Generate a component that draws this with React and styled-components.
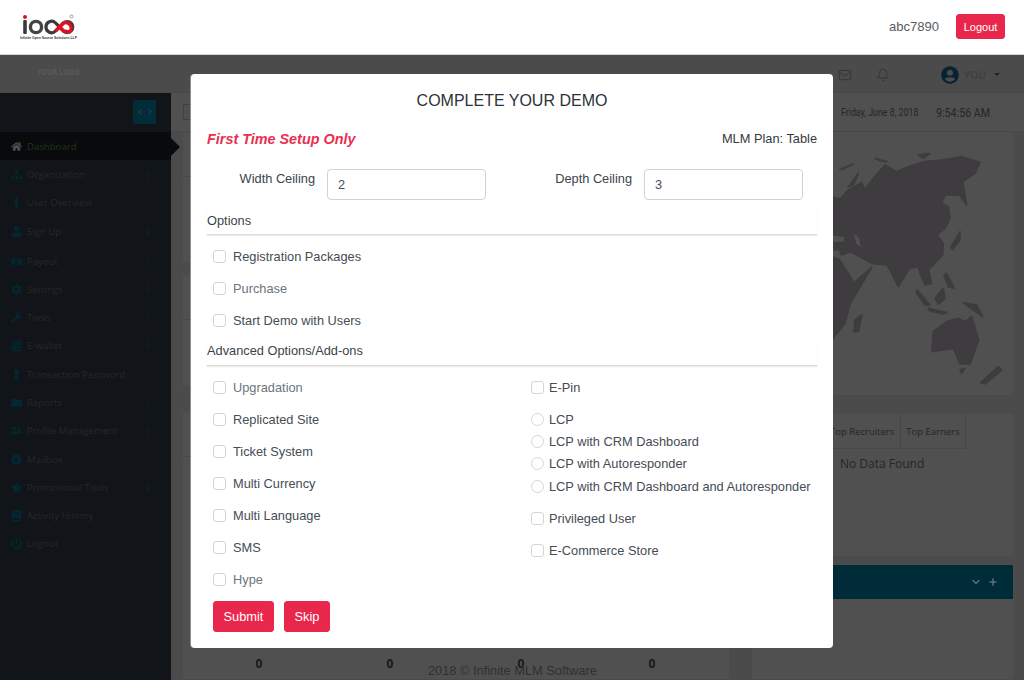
import React from "react";
import styled, { createGlobalStyle } from "styled-components";
import {
  FaHome, FaSitemap, FaMale, FaUser, FaMoneyBillAlt, FaCog, FaWrench, FaCalendarAlt,
  FaFolder, FaUserFriends, FaDotCircle, FaStar, FaBook, FaPowerOff, FaUserCircle,
} from "react-icons/fa";
import { ChevronRight, ChevronLeft, ChevronDown, Plus, Mail, Bell } from "lucide-react";

const Global = createGlobalStyle`
  html, body { margin: 0; padding: 0; background: #4b4b4b; }
  * { box-sizing: border-box; }
  body { font-family: "Liberation Sans", Arial, sans-serif; }
`;

const Page = styled.div`
  position: relative; width: 1024px; height: 680px; overflow: hidden;
  display: flex; flex-direction: column; background: #4b4b4b;
`;
const TopBar = styled.header`
  height: 55px; flex: none; background: #fff; border-bottom: 1px solid #d6d6d6;
  display: flex; align-items: center; padding: 0 19px 1px 20px;
`;
const LogoBox = styled.div`
  display: flex; flex-direction: column; align-items: flex-start; width: 60px; margin-top: 2px;
`;
const LogoTiny = styled.span`
  font-size: 3.4px; line-height: 5px; margin-top: 1px; white-space: nowrap; color: #333; font-weight: 700;
`;
const UserName = styled.span`
  margin-left: auto; font-size: 13px; color: #555c63; margin-right: 17px;
`;
const RedButton = styled.button`
  border: 1px solid #e9264b; background: #e9264b; color: #fff; border-radius: 3px;
  font-family: inherit; cursor: pointer; padding: 0;
  font-size: ${p => p.$small ? "11px" : "12.8px"};
  width: ${p => p.$w}px; height: ${p => p.$small ? "25px" : "31px"};
`;
const Strip = styled.div`
  height: 38px; flex: none; background: #4b4b4b; display: flex; align-items: center;
  padding: 0 24px 4px 37px; color: #2e2e2e; border-bottom: 1px solid #474747;
`;
const StripLogo = styled.span`
  display: inline-block; font-family: "Open Sans", sans-serif; font-size: 8.5px; font-weight: 700; color: #5a5a5a;
  white-space: nowrap; transform: scaleX(.84); transform-origin: left;
`;
const StripRight = styled.div`
  margin-left: auto; display: flex; align-items: center; padding-top: 6px;
`;
const YouLabel = styled.span`
  font-family: "Open Sans", sans-serif; font-size: 10.5px; font-weight: 600; color: #3c4044; margin-left: 5px;
`;
const Caret = styled.span`
  width: 0; height: 0; margin-left: 8px; border: 3px solid transparent; border-top: 3px solid #0a2a38; border-bottom: 0;
`;
const Body = styled.div`
  flex: 1; min-height: 0; display: flex;
`;
const Sidebar = styled.nav`
  width: 171px; flex: none; background: #111419; padding-top: 7px; position: relative;
`;
const Toggle = styled.div`
  width: 23px; height: 24px; background: #022c38; border-radius: 2px; margin: 0 15px 8px auto;
  display: flex; align-items: center; justify-content: center; color: #2a5360;
`;
const NavRow = styled.div`
  height: 28.3px; display: flex; align-items: center; padding: 0 16px 0 11px; position: relative;
  margin-top: ${p => p.$gap ? "1.7px" : "0"};
  font-family: "Open Sans", sans-serif; font-size: 9.6px; white-space: nowrap;
  color: ${p => p.$active ? "#21351f" : "#25282c"};
  background: ${p => p.$active ? "#090a0c" : "transparent"};
  svg.nav { color: ${p => p.$active ? "#4d5052" : "#032631"}; width: 11px; height: 11px; margin-right: 5px; flex: none; }
  svg.more { color: #032631; margin-left: auto; }
`;
const ActiveArrow = styled.span`
  position: absolute; right: -9px; top: 6px; width: 0; height: 0;
  border-top: 9px solid transparent; border-bottom: 9px solid transparent; border-left: 9px solid #090a0c;
`;
const Main = styled.main`
  flex: 1; min-width: 0; display: flex; flex-direction: column; background: #4b4b4b;
`;
const DateBar = styled.div`
  height: 39px; flex: none; display: flex; align-items: center; background: #505050;
  padding: 0 34px 0 12px; border-bottom: 1px solid #484848;
`;
const SmallBox = styled.span`
  width: 14px; height: 16px; border: 1px solid #404040; border-radius: 2px;
`;
const DateText = styled.span`
  margin-left: auto; width: 77px; white-space: nowrap; font-family: Roboto, sans-serif;
  font-size: 10.5px; color: #262626; display: inline-block; transform: scaleX(.84); transform-origin: left;
`;
const TimeText = styled.span`
  margin-left: 18px; width: 54px; white-space: nowrap; font-family: Roboto, sans-serif; font-size: 13px;
  color: #262626; display: inline-block; transform: scaleX(.82); transform-origin: left;
`;
const Columns = styled.div`
  flex: 1; min-height: 0; display: grid; grid-template-columns: 546px 261px; column-gap: 23px; padding: 0 11px 0 12px;
`;
const Col = styled.div`
  display: flex; flex-direction: column; min-height: 0;
`;
const Card = styled.div`
  background: #505050; height: ${p => p.$h}px; flex: ${p => p.$h ? "none" : 1};
  margin-bottom: ${p => p.$mb || 0}px; border-bottom: 1px solid #4a4a4a;
  display: flex; flex-direction: column; position: relative; overflow: hidden;
`;
const CardHead = styled.div`
  height: 45px; flex: none; border-bottom: 1px solid #484848;
`;
const Stats = styled.div`
  margin-top: auto; height: 32px; flex: none; display: grid; grid-template-columns: repeat(4, 131px);
  padding-left: 10.5px; align-items: center;
`;
const Stat = styled.span`
  text-align: center; font-family: "Open Sans", sans-serif; font-size: 12px; font-weight: 700; color: #17191c;
`;
const MapSvg = styled.svg`
  display: block; margin-left: auto; flex: none;
`;
const Tabs = styled.div`
  display: flex; justify-content: flex-end; padding-right: 47px; height: 35px; flex: none;
`;
const Tab = styled.span`
  border: 1px solid #484848; border-width: 0 1px 1px 0; padding: 0 5.5px; display: flex; align-items: center;
  font-family: "Open Sans", sans-serif; font-size: 9.5px; color: #232528; white-space: nowrap;
`;
const NoData = styled.div`
  font-family: "Open Sans", sans-serif; font-size: 12px; color: #24262a; padding: 6px 0 0 88px;
`;
const TealBar = styled.div`
  height: 34px; flex: none; background: #002c3a; display: flex; align-items: center; justify-content: flex-end;
  padding-right: 15px; gap: 6px; color: #5b6a70;
`;
const Footer = styled.div`
  position: absolute; left: 428px; top: 663px; font-size: 12.8px; color: #2e3033; white-space: nowrap;
`;
const Modal = styled.section`
  position: absolute; left: 191px; top: 74px; width: 642px; height: 574px; background: #fff;
  border-radius: 4px; box-shadow: -1px 0 0 #8d8d8d; padding: 0 16px; color: #434a52;
`;
const Title = styled.h2`
  margin: 0; height: 51px; padding-top: 2px; display: flex; align-items: center; justify-content: center;
  font-size: 16px; font-weight: 400; color: #2c3138;
`;
const SetupRow = styled.div`
  height: 28px; display: flex; align-items: center; justify-content: space-between;
`;
const Setup = styled.strong`
  color: #e9304f; font-size: 14.4px; font-style: italic;
`;
const Plan = styled.span`
  font-size: 12.8px; color: #343a40; margin-top: -2px;
`;
const CeilingRow = styled.div`
  margin-top: 16px; height: 31px; display: grid; grid-template-columns: 120px 159px 158px 159px;
`;
const CeilingLabel = styled.label`
  font-size: 12.8px; text-align: right; padding: 2px 12px 0 0; line-height: 16px; color: #3c434a;
`;
const NumberInput = styled.input`
  width: 159px; height: 31px; border: 1px solid #ced4da; border-radius: 4px; padding: 0 10px;
  font: 12.8px "Liberation Sans", Arial, sans-serif; color: #495057; background: #fff;
`;
const SectionHead = styled.div`
  height: ${p => p.$h}px; display: flex; align-items: flex-end; padding-bottom: ${p => p.$pb}px; font-size: 12.8px;
  color: #3c434a; border-bottom: 1px solid #dcdcdc; box-shadow: 0 1px 1px #ececec; margin-bottom: ${p => p.$mb}px;
`;
const OptionsGrid = styled.div`
  display: grid; grid-template-columns: 317px 1fr;
`;
const Option = styled.label`
  height: ${p => p.$h || 32}px; display: flex; align-items: center; padding-left: ${p => p.$right ? 7 : 6}px;
  font-size: 12.8px; color: ${p => p.$off ? "#6c757d" : "#454c54"};
`;
const Check = styled.input`
  appearance: none; margin: 0 ${p => p.$right ? 5 : 7}px 0 0; width: 13px; height: 13px; background: #fff;
  border: 1px solid #d2d6da; border-radius: ${p => p.type === "radio" ? "50%" : "3px"}; flex: none;
`;
const RadioGroup = styled.div`
  margin: 5px 0;
`;
const Buttons = styled.div`
  display: flex; gap: 10px; padding: 6px 0 0 6px;
`;

const Keyhole = (props) => (
  <svg {...props} viewBox="0 0 12 12" fill="currentColor">
    <circle cx="6" cy="3" r="2.800" />
    <path d="M4.600 4h2.800l.6 6.500h1v1.500H3v-1.500h1z" />
  </svg>
);

const nav = [
  [FaHome, "Dashboard", 0, 1], [FaSitemap, "Organization", 1], [FaMale, "User Overview"], [FaUser, "Sign Up", 1],
  [FaMoneyBillAlt, "Payout", 1, 0, 1], [FaCog, "Settings", 1], [FaWrench, "Tools", 1], [FaCalendarAlt, "E-wallet", 1],
  [Keyhole, "Transaction Password"], [FaFolder, "Reports", 1], [FaUserFriends, "Profile Management", 1],
  [FaDotCircle, "Mailbox"], [FaStar, "Promotional Tools", 1], [FaBook, "Activity History"], [FaPowerOff, "Logout"],
];

const Box = ({ children, off, right }) => (
  <Option $off={off} $right={right}><Check type="checkbox" $right={right} />{children}</Option>
);
const Radio = ({ children }) => (
  <Option $right $h={22.33}><Check type="radio" name="lcp" $right />{children}</Option>
);

const Logo = () => (
  <LogoBox>
    <svg width="58" height="21" viewBox="0 0 58 21">
      <circle cx="5" cy="3" r="2" fill="#d8142a" />
      <rect x="3.200" y="6" width="3.600" height="14" rx="1" fill="#3a3a3a" />
      <circle cx="16" cy="13" r="5.600" fill="none" stroke="#444" strokeWidth="3.400" />
      <path d="M26 13a5.500 5.500 0 0 1 9.500-4l8 8a5.500 5.500 0 1 0 0-8l-8 8a5.500 5.500 0 0 1-9.500-4z" fill="none" stroke="#3b3b3b" strokeWidth="3.200" />
      <path d="M35.500 17l8-8a5.500 5.500 0 0 1 6 9l-6-1-3-3" fill="none" stroke="#e01020" strokeWidth="3.400" />
      <circle cx="51.500" cy="2.500" r="1.500" fill="none" stroke="#777" strokeWidth=".7" />
    </svg>
    <LogoTiny>Infinite Open Source Solutions LLP</LogoTiny>
  </LogoBox>
);

const WorldMap = () => (
  <MapSvg width="183" height="264" viewBox="0 -24 549 792">
    <g fill="#3e3c3e" stroke="#3e3c3e" strokeWidth="5" strokeLinejoin="round">
      <path d="M0 168 30 178 55 150 95 128 105 150 130 115 165 75 200 95 240 78 285 65 335 60 395 50 450 68 435 100 398 125 410 195 388 165 345 165 335 190 355 200 360 235 345 265 320 285 340 310 338 345 310 375 295 390 305 430 285 435 270 400 265 380 238 385 205 440 180 390 170 375 125 370 90 350 60 335 35 345 0 325Z" />
      <path d="M0 350 28 358 72 428 125 382 100 425 60 492 45 550 0 606Z" />
      <path d="M310 575 350 545 385 535 405 545 425 530 446 600 420 672 390 672 370 625 305 635Z" />
      <path d="M262 450 300 495 285 495 258 455Z" />
      <path d="M315 475 340 445 345 475 325 492Z" />
      <path d="M400 488 440 495 458 530 430 510Z" />
      <path d="M350 400 365 430 372 445 355 440 342 405Z" />
      <path d="M362 322 390 275 390 300 368 328Z" />
      <path d="M75 540 95 525 85 575 72 575Z" />
      <path d="M452 728 505 680 515 690 465 732Z" />
      <path d="M295 505 350 518 340 522 298 512Z" />
      <path d="M135 55 170 65 150 62ZM265 45 300 40 280 55ZM30 88 70 72 45 85ZM55 140 85 100 70 135Z" />
      <path d="M390 690 405 685 395 700Z" />
    </g>
    <g fill="#505050">
      <path d="M0 285 45 292 40 305 12 305 0 300Z" />
      <path d="M72 280 88 295 92 322 78 310Z" />
      <path d="M0 330 28 332 32 348 0 345Z" />
    </g>
  </MapSvg>
);

export default function App() {
  return (
    <Page>
      <Global />
      <TopBar>
        <Logo />
        <UserName>abc7890</UserName>
        <RedButton $small $w={49}>Logout</RedButton>
      </TopBar>
      <Strip>
        <StripLogo>YOUR LOGO</StripLogo>
        <StripRight>
          <Mail size={14} strokeWidth={1.200} />
          <Bell size={14} strokeWidth={1.200} style={{ marginLeft: 24 }} />
          <FaUserCircle size={18} color="#082231" style={{ marginLeft: 51 }} />
          <YouLabel>YOU</YouLabel>
          <Caret />
        </StripRight>
      </Strip>
      <Body>
        <Sidebar>
          <Toggle><ChevronLeft size={10} /><ChevronRight size={10} /></Toggle>
          {nav.map(([Icon, label, more, active, gap]) => (
            <NavRow key={label} $active={active} $gap={gap}>
              <Icon className="nav" />
              {label}
              {more ? <ChevronRight className="more" size={13} /> : null}
              {active ? <ActiveArrow /> : null}
            </NavRow>
          ))}
        </Sidebar>
        <Main>
          <DateBar>
            <SmallBox />
            <DateText>Friday, June 8, 2018</DateText>
            <TimeText>9:54:56 AM</TimeText>
          </DateBar>
          <Columns>
            <Col>
              <Card $h={131} $mb={12}><CardHead /></Card>
              <Card $h={112} $mb={25}><CardHead /></Card>
              <Card><CardHead /><Stats><Stat>0</Stat><Stat>0</Stat><Stat>0</Stat><Stat>0</Stat></Stats></Card>
            </Col>
            <Col>
              <Card $h={264} $mb={18}><WorldMap /></Card>
              <Card $h={143} $mb={8}>
                <Tabs><Tab>Top Recruiters</Tab><Tab>Top Earners</Tab></Tabs>
                <NoData>No Data Found</NoData>
              </Card>
              <TealBar><ChevronDown size={12} strokeWidth={3} /><Plus size={10} strokeWidth={4} /></TealBar>
              <Card />
            </Col>
          </Columns>
        </Main>
      </Body>
      <Footer>2018 © Infinite MLM Software</Footer>
      <Modal>
        <Title>COMPLETE YOUR DEMO</Title>
        <SetupRow>
          <Setup>First Time Setup Only</Setup>
          <Plan>MLM Plan: Table</Plan>
        </SetupRow>
        <CeilingRow>
          <CeilingLabel>Width Ceiling</CeilingLabel>
          <NumberInput defaultValue="2" />
          <CeilingLabel>Depth Ceiling</CeilingLabel>
          <NumberInput defaultValue="3" />
        </CeilingRow>
        <SectionHead $h={35} $pb={6} $mb={5}>Options</SectionHead>
        <Box>Registration Packages</Box>
        <Box off>Purchase</Box>
        <Box>Start Demo with Users</Box>
        <SectionHead $h={30} $pb={7} $mb={5}>Advanced Options/Add-ons</SectionHead>
        <OptionsGrid>
          <div>
            <Box off>Upgradation</Box>
            <Box>Replicated Site</Box>
            <Box>Ticket System</Box>
            <Box>Multi Currency</Box>
            <Box>Multi Language</Box>
            <Box>SMS</Box>
            <Box off>Hype</Box>
          </div>
          <div>
            <Box right>E-Pin</Box>
            <RadioGroup>
              <Radio>LCP</Radio>
              <Radio>LCP with CRM Dashboard</Radio>
              <Radio>LCP with Autoresponder</Radio>
              <Radio>LCP with CRM Dashboard and Autoresponder</Radio>
            </RadioGroup>
            <Box right>Privileged User</Box>
            <Box right>E-Commerce Store</Box>
          </div>
        </OptionsGrid>
        <Buttons>
          <RedButton $w={61}>Submit</RedButton>
          <RedButton $w={46}>Skip</RedButton>
        </Buttons>
      </Modal>
    </Page>
  );
}
